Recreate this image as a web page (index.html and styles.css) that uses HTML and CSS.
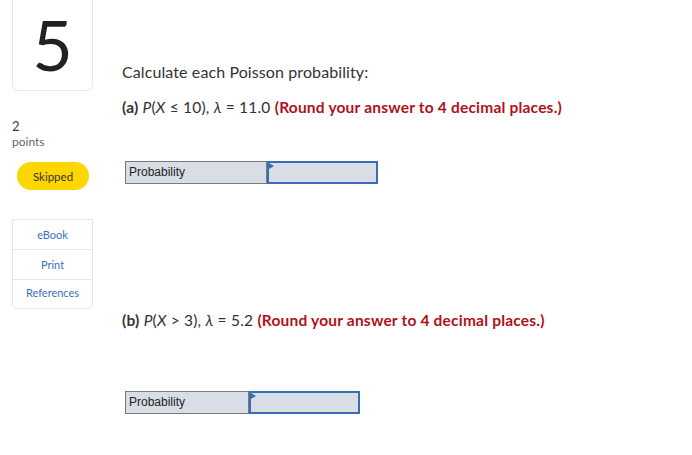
FILE: index.html
```html
<!DOCTYPE html>
<html>
<head>
<meta charset="utf-8">
<link rel="stylesheet" href="styles.css">
</head>
<body>
<div class="page">
  <aside class="side">
    <div class="qnum">5</div>
    <div class="pts"><span class="pts-n">2</span><span class="pts-l">points</span></div>
    <div class="pill">Skipped</div>
    <div class="links">
      <div class="link">eBook</div>
      <div class="link">Print</div>
      <div class="link">References</div>
    </div>
  </aside>
  <main class="main">
    <p class="intro">Calculate each Poisson probability:</p>
    <p class="part"><b>(a)</b> <i>P</i>(<i>X</i> ≤ 10), <i>λ</i> = 11.0 <span class="req">(Round your answer to 4 decimal places.)</span></p>
    <div class="ans ans-a">
      <div class="lbl">Probability</div>
      <div class="inp"><span class="flag"></span></div>
    </div>
    <p class="part part-b"><b>(b)</b> <i>P</i>(<i>X</i> &gt; 3), <i>λ</i> = 5.2 <span class="req">(Round your answer to 4 decimal places.)</span></p>
    <div class="ans ans-b">
      <div class="lbl">Probability</div>
      <div class="inp"><span class="flag"></span></div>
    </div>
  </main>
</div>
</body>
</html>
```
FILE: styles.css
```css
html, body { margin: 0; padding: 0; background: #fff; }
body { font-family: Lato, "Open Sans", sans-serif; color: #333; }
.page { display: flex; }
.side { width: 81px; margin-left: 12px; display: flex; flex-direction: column; }
.qnum {
  box-sizing: border-box; height: 91px; border: 1px solid #e8e8e8; border-top: none; border-radius: 0 0 6px 6px;
  display: flex; align-items: center; justify-content: center;
  font-size: 70px; font-weight: 400; color: #222; line-height: 1; padding-bottom: 2px;
}
.pts { display: flex; flex-direction: column; margin-top: 28px; }
.pts-n { font-size: 13px; color: #1f3b6e; line-height: 14px; }
.pts-l { font-size: 12px; color: #666; line-height: 14px; margin-top: 2px; }
.pill {
  margin: 13px 0 0 5px; width: 72px; height: 28px; border-radius: 14px; background: #ffd600;
  font-size: 11.5px; color: #333; display: flex; align-items: center; justify-content: center;
}
.links { margin-top: 29px; border: 1px solid #e6e6e6; border-radius: 0 0 5px 5px; }
.link { font-size: 11px; color: #3a6fb8; text-align: center; height: 29px; line-height: 29px; }
.link + .link { border-top: 1px solid #e6e6e6; }
.link:last-child { height: 28px; line-height: 26px; }
.main { margin-left: 29px; padding-top: 62px; display: flex; flex-direction: column; }
p { margin: 0; }
.intro { font-size: 16px; line-height: 20px; color: #333; letter-spacing: 0.1px; }
.part { font-size: 15.5px; line-height: 20px; margin-top: 15px; color: #333; letter-spacing: 0.2px; }
.part b { font-weight: 700; }
.part i { font-style: italic; }
.req { color: #b0121b; font-weight: 700; }
.ans { display: flex; margin-left: 3px; height: 23px; }
.ans-a { margin-top: 44px; }
.ans-b { margin-top: 61px; }
.lbl {
  box-sizing: border-box; height: 23px; background: #d9dde6; border: 1px solid #7a7a7a;
  font-family: "Liberation Sans", Arial, sans-serif; font-size: 12px; color: #222;
  padding: 0 0 0 3px; line-height: 21px;
}
.ans-a .lbl { width: 142px; }
.ans-b .lbl { width: 124px; }
.inp { position: relative; box-sizing: border-box; height: 23px; background: #d9dde6; border: 2px solid #3a6db3; }
.ans-a .inp { width: 111px; }
.ans-b .inp { width: 111px; }
.part-b { margin-top: 126px; }
.flag { position: absolute; left: 0; top: 0; width: 0; height: 0; border-top: 3px solid transparent; border-bottom: 3px solid transparent; border-left: 5px solid #3a6db3; }
```
